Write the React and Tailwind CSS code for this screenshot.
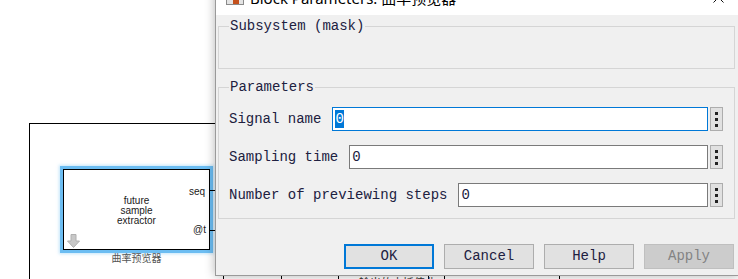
import React from 'react';

const mono = "font-['Liberation_Mono',monospace]";

const DotsButton = () => (
  <div className="ml-[2px] flex h-[24px] w-[13px] flex-col items-center justify-center gap-[3px] border border-[#adadad] bg-[#e1e1e1]">
    <span className="block h-[3px] w-[3px] bg-[#222]" />
    <span className="block h-[3px] w-[3px] bg-[#222]" />
    <span className="block h-[3px] w-[3px] bg-[#222]" />
  </div>
);

const ParamRow = ({ label, value, focused }) => (
  <div className="flex h-[24px] items-center">
    <span className="whitespace-pre leading-[18px]">{label}</span>
    <div
      className={
        focused
          ? 'ml-[11px] flex h-[24px] flex-1 items-center border border-[#0078d7] bg-white px-[2px]'
          : 'ml-[11px] flex h-[24px] flex-1 items-center border border-[#7a7a7a] bg-white px-[2px]'
      }
    >
      {focused ? (
        <span className="bg-[#0078d7] leading-[18px] text-white">{value}</span>
      ) : (
        <span className="leading-[18px]">{value}</span>
      )}
    </div>
    <DotsButton />
  </div>
);

const DialogButton = ({ children, variant }) => {
  let cls = 'flex h-[25px] w-[90px] items-center justify-center border border-[#adadad] bg-[#e1e1e1]';
  if (variant === 'default') cls = 'flex h-[25px] w-[90px] items-center justify-center border-2 border-[#0078d7] bg-[#e1e1e1]';
  if (variant === 'disabled') cls = 'flex h-[25px] w-[90px] items-center justify-center border border-[#bfbfbf] bg-[#cccccc] text-[#838383]';
  return <div className={cls}>{children}</div>;
};

const BlockIcon = () => (
  <svg width="18" height="16" viewBox="0 0 18 16" className="mb-[6px] shrink-0">
    <rect x="0.5" y="0.5" width="17" height="15" fill="#e4e4e4" stroke="#8a8a8a" />
    <rect x="2" y="2" width="14" height="3" fill="#b9b9b9" />
    <rect x="7" y="7" width="6" height="8" fill="#c4501c" />
  </svg>
);

const App = () => {
  return (
    <div className="relative h-[279px] w-[738px] overflow-hidden bg-white">
      {/* model canvas */}
      <div className="absolute left-[29px] top-[123px] h-[300px] w-[400px] border border-black" />

      <div className="absolute left-[63px] top-[169px] h-[81px] w-[147px] border border-black bg-white shadow-[0_0_0_3px_#6cbdf2,0_0_3px_4px_rgba(108,189,242,0.4)] font-['Liberation_Sans',Arial,sans-serif] text-[10px] leading-[10px] text-[#1a1a1a]">
        <div className="flex h-full flex-col items-center justify-center pt-[2px]">
          <span>future</span>
          <span>sample</span>
          <span>extractor</span>
        </div>
        <span className="absolute right-[4px] top-[17px]">seq</span>
        <span className="absolute right-[3px] top-[55px]">@t</span>
        <svg width="13" height="14" viewBox="0 0 13 14" className="absolute bottom-[1px] left-[3px]">
          <path d="M4 0.5 H9 V7 H12.5 L6.5 13.5 L0.5 7 H4 Z" fill="#c8c8c8" stroke="#b0b0b0" strokeWidth="1" />
        </svg>
      </div>
      <div className="absolute left-[210px] top-[190px] h-[1px] w-[7px] bg-black" />
      <div className="absolute left-[210px] top-[230px] h-[1px] w-[7px] bg-black" />
      <div className="absolute left-[63px] top-[252px] w-[147px] text-center font-['Noto_Sans_CJK_SC',sans-serif] text-[10px] leading-[12px] text-[#555]">
        曲率预览器
      </div>

      {/* table under dialog */}
      <div className="absolute left-[223px] top-[268px] flex h-[20px] font-['Noto_Sans_CJK_SC',sans-serif] text-[11px] leading-[14px] text-[#333]">
        <div className="w-[58px] border-l border-black" />
        <div className="w-[57px] border-l border-black" />
        <div className="w-[106px] border-l border-black pl-[20px] pt-[7px]">输出的内插值曲线</div>
        <div className="w-[115px] border-l border-black" />
        <div className="w-[200px] border-l border-black" />
      </div>

      {/* Block Parameters dialog */}
      <div className="absolute left-[215px] top-[-16px] flex w-[524px] flex-col border border-[#9a9a9a] bg-[#f0f0f0] shadow-[0_0_10px_rgba(0,0,0,0.3)]">
        <div className="flex h-[30px] items-center bg-white pl-[10px] pr-[14px]">
          <BlockIcon />
          <span className="mb-[4px] ml-[6px] whitespace-nowrap font-['Noto_Sans','Noto_Sans_CJK_SC',sans-serif] text-[15px] text-black">
            Block Parameters: 曲率预览器
          </span>
          <div className="flex-1" />
          <svg width="11" height="11" viewBox="0 0 11 11" className="mb-[6px]">
            <path d="M0.5 0.5 L10.5 10.5 M10.5 0.5 L0.5 10.5" stroke="#111" strokeWidth="1" />
          </svg>
        </div>

        <div className={`flex flex-col pb-[6px] pl-[2px] pr-[3px] ${mono} text-[14px] text-[#202040]`}>
          <div className="mt-[11px] h-[43px] border border-[#d5d5d5]">
            <span className="-mt-[10px] ml-[10px] block w-fit bg-[#f0f0f0] px-[1px] leading-[18px]">Subsystem (mask)</span>
          </div>

          <div className="mt-[18px] border border-[#d5d5d5] pb-[11px]">
            <span className="-mt-[10px] ml-[10px] block w-fit bg-[#f0f0f0] px-[1px] leading-[18px]">Parameters</span>
            <div className="mt-[11px] flex flex-col gap-[14px] pl-[10px] pr-[11px]">
              <ParamRow label="Signal name" value="0" focused />
              <ParamRow label="Sampling time" value="0" />
              <ParamRow label="Number of previewing steps" value="0" />
            </div>
          </div>

          <div className="mr-[1px] mt-[25px] flex justify-end gap-[10px]">
            <DialogButton variant="default">OK</DialogButton>
            <DialogButton>Cancel</DialogButton>
            <DialogButton>Help</DialogButton>
            <DialogButton variant="disabled">Apply</DialogButton>
          </div>
        </div>
      </div>
    </div>
  );
};

export default App;
